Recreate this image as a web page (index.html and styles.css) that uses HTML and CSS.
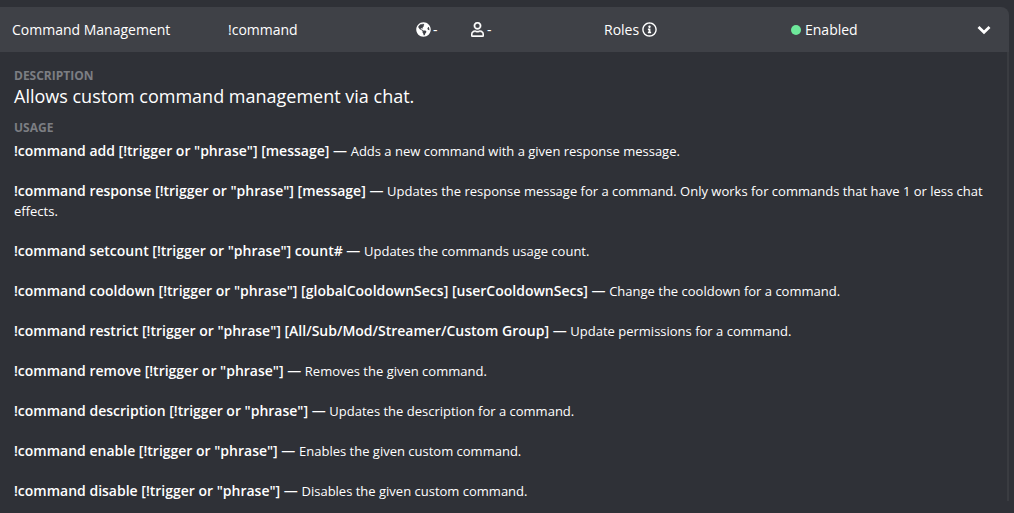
FILE: index.html
```html
<!DOCTYPE html>
<html lang="en">
<head>
<meta charset="utf-8">
<title>Command Management</title>
<link rel="stylesheet" href="styles.css">
</head>
<body>
<div class="panel">
  <header class="row">
    <div class="col col-name">Command Management</div>
    <div class="col col-trigger">!command</div>
    <div class="col col-global">
      <svg class="ico" viewBox="0 0 496 512"><path fill="currentColor" d="M248 8C111.030 8 0 119.030 0 256s111.030 248 248 248 248-111.030 248-248S384.970 8 248 8zm82.290 357.600c-3.900 3.880-7.990 7.950-11.310 11.280-2.990 3-5.100 6.700-6.170 10.710-1.510 5.660-2.730 11.380-4.770 16.870l-17.390 46.850c-13.760 3-28 4.690-42.650 4.690v-27.380c1.690-12.620-7.640-36.260-22.630-51.250-6-6-9.370-14.140-9.370-22.630v-32.010c0-11.640-6.270-22.340-16.460-27.970-14.370-7.950-34.810-19.060-48.810-26.110-11.480-5.780-22.100-13.140-31.650-21.750l-.8-.72a114.792 114.792 0 0 1-18.060-20.740c-9.380-13.770-24.660-36.420-34.590-51.140 20.470-45.500 57.360-82.040 103.200-101.890l24.010 12.010C203.480 89.740 216 82.010 216 70.110v-11.300c7.990-1.290 16.120-2.110 24.450-2.430l28.300 28.300c6.250 6.250 6.250 16.380 0 22.630L264 112l-10.340 10.340c-3.120 3.120-3.120 8.190 0 11.310l4.690 4.690c3.120 3.120 3.120 8.190 0 11.310l-8 8a8.008 8.008 0 0 1-5.660 2.340h-8.990c-2.080 0-4.080.81-5.580 2.270l-9.920 9.650a8.008 8.008 0 0 0-1.580 9.310l15.590 31.190c2.660 5.320-1.210 11.580-7.150 11.580h-5.640c-1.930 0-3.790-.7-5.240-1.960l-9.280-8.060a16.017 16.017 0 0 0-15.550-3.100l-31.170 10.390a11.950 11.950 0 0 0-8.170 11.340c0 4.530 2.560 8.660 6.610 10.690l11.080 5.540c9.410 4.710 19.790 7.160 30.310 7.160s22.590 27.290 32 32h66.750c8.490 0 16.620 3.370 22.630 9.370l13.690 13.690a30.503 30.503 0 0 1 8.930 21.570 46.536 46.536 0 0 1-13.720 32.980zM417 274.250c-5.790-1.450-10.840-5-14.150-9.970l-17.980-26.970a23.970 23.970 0 0 1 0-26.620l19.590-29.380c2.320-3.470 5.500-6.290 9.240-8.150l12.980-6.490C440.200 193.590 448 223.870 448 256c0 8.670-.74 17.160-1.820 25.540L417 274.250z"/></svg>
      <span>-</span>
    </div>
    <div class="col col-user">
      <svg class="ico ico-user" viewBox="0 0 448 512"><path fill="currentColor" stroke="currentColor" stroke-width="14" d="M224 256c70.700 0 128-57.300 128-128S294.700 0 224 0 96 57.300 96 128s57.300 128 128 128zm0-208c44.100 0 80 35.900 80 80s-35.900 80-80 80-80-35.900-80-80 35.900-80 80-80zM313.600 288c-28.700 0-42.500 16-89.600 16s-60.800-16-89.600-16C60.200 288 0 348.200 0 422.400V464c0 26.500 21.500 48 48 48h352c26.500 0 48-21.500 48-48v-41.600c0-74.200-60.200-134.400-134.400-134.400zM400 464H48v-41.600C48 374.800 86.800 336 134.400 336c14.600 0 38.300 16 89.600 16 51.700 0 74.900-16 89.600-16 47.600 0 86.400 38.800 86.400 86.400V464z"/></svg>
      <span>-</span>
    </div>
    <div class="col col-roles">
      <span>Roles</span>
      <svg class="ico ico-info" viewBox="0 0 512 512"><path fill="currentColor" d="M256 8C119.043 8 8 119.083 8 256c0 136.997 111.043 248 248 248s248-111.003 248-248C504 119.083 392.957 8 256 8zm0 448c-110.532 0-200-89.431-200-200 0-110.495 89.472-200 200-200 110.491 0 200 89.471 200 200 0 110.530-89.431 200-200 200zm0-338c23.196 0 42 18.804 42 42s-18.804 42-42 42-42-18.804-42-42 18.804-42 42-42zm56 254c0 6.627-5.373 12-12 12h-88c-6.627 0-12-5.373-12-12v-24c0-6.627 5.373-12 12-12h12v-64h-12c-6.627 0-12-5.373-12-12v-24c0-6.627 5.373-12 12-12h64c6.627 0 12 5.373 12 12v100h12c6.627 0 12 5.373 12 12v24z"/></svg>
    </div>
    <div class="col col-status"><span class="dot"></span><span>Enabled</span></div>
    <svg class="chevron" viewBox="0 0 14 10"><path d="M1.500 2l5.500 5.200L12.500 2" fill="none" stroke="currentColor" stroke-width="2.800"/></svg>
  </header>
  <section class="body">
    <h5 class="label">DESCRIPTION</h5>
    <p class="desc">Allows custom command management via chat.</p>
    <h5 class="label">USAGE</h5>
    <div class="usage"><b>!command add [!trigger or "phrase"] [message]</b><span class="sep"> — </span>Adds a new command with a given response message.</div>
    <div class="usage"><b>!command response [!trigger or "phrase"] [message]</b><span class="sep"> — </span>Updates the response message for a command. Only works for commands that have 1 or less chat effects.</div>
    <div class="usage"><b>!command setcount [!trigger or "phrase"] count#</b><span class="sep"> — </span>Updates the commands usage count.</div>
    <div class="usage"><b>!command cooldown [!trigger or "phrase"] [globalCooldownSecs] [userCooldownSecs]</b><span class="sep"> — </span>Change the cooldown for a command.</div>
    <div class="usage"><b>!command restrict [!trigger or "phrase"] [All/Sub/Mod/Streamer/Custom Group]</b><span class="sep"> — </span>Update permissions for a command.</div>
    <div class="usage"><b>!command remove [!trigger or "phrase"]</b><span class="sep"> — </span>Removes the given command.</div>
    <div class="usage"><b>!command description [!trigger or "phrase"]</b><span class="sep"> — </span>Updates the description for a command.</div>
    <div class="usage"><b>!command enable [!trigger or "phrase"]</b><span class="sep"> — </span>Enables the given custom command.</div>
    <div class="usage"><b>!command disable [!trigger or "phrase"]</b><span class="sep"> — </span>Disables the given custom command.</div>
  </section>
</div>
</body>
</html>
```
FILE: styles.css
```css
html, body {
  margin: 0;
  height: 100%;
  overflow: hidden;
  background: #2f3137;
}
body {
  padding-top: 7px;
  box-sizing: border-box;
  font-family: "Open Sans", sans-serif;
  color: #fff;
}
.panel {
  width: 1009px;
}
.row {
  height: 45px;
  background: #3f4147;
  border-radius: 0 8px 0 0;
  display: flex;
  align-items: center;
  font-size: 14px;
}
.col {
  display: flex;
  align-items: center;
  white-space: nowrap;
}
.col-name { width: 216px; padding-left: 12px; }
.col-trigger { width: 188px; }
.col-global { width: 55px; gap: 2px; }
.col-user { width: 133px; gap: 3px; }
.col-roles { width: 187px; gap: 3px; }
.col-status { gap: 4px; flex: 1; }
.ico { width: 15px; height: 15px; display: block; flex: none; }
.ico-user { width: 13px; }
.dot { width: 10px; height: 10px; border-radius: 50%; background: #6ee89b; }
.chevron { width: 14px; height: 10px; margin-right: 18px; }
.body {
  padding: 16px 14px 0;
  background: #2f3137;
  border-right: 2px solid #3a3c41;
}
.label {
  margin: 0;
  font-size: 12px;
  line-height: 16px;
  font-weight: 700;
  color: #7c7e83;
}
.desc {
  margin: 0 0 12px;
  font-size: 18px;
  line-height: 24px;
}
.usage {
  font-size: 13px;
  line-height: 20px;
  margin: 5px 0 20px;
}
.usage b { font-size: 14px; font-weight: 600; }
.sep { font-size: 14px; }
```
